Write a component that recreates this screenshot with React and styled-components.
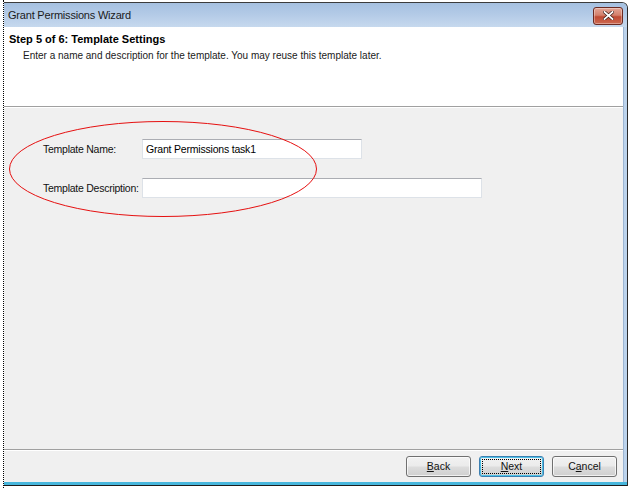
import React from 'react';
import styled, { createGlobalStyle, css } from 'styled-components';

const GlobalStyle = createGlobalStyle`
  html, body {
    margin: 0;
    padding: 0;
    background: #fff;
  }
  body {
    font-family: "Liberation Sans", Arial, sans-serif;
    font-size: 11px;
    color: #000;
  }
`;

const Page = styled.div`
  width: 630px;
  height: 490px;
  overflow: hidden;
  background: #fff;
  position: relative;
`;

const Frame = styled.div`
  margin-left: 3px;
  height: 488px;
  border-left: 1px dotted #000;
  display: flex;
`;

const Window = styled.div`
  margin-top: 2px;
  width: 624px;
  height: 484px;
  display: flex;
  flex-direction: column;
  border-top: 1px solid #3b3b3b;
  border-right: 1px solid #2b2b2b;
  border-top-right-radius: 6px;
  box-sizing: border-box;
  background: #bcd3ec;
  position: relative;
`;

const TitleBar = styled.div`
  height: 24px;
  flex: none;
  display: flex;
  align-items: center;
  justify-content: space-between;
  padding: 0 4px 0 4px;
  background: linear-gradient(to bottom, #a5c0e0 0%, #b4cbe7 50%, #c6d9ee 100%);
  border-top-right-radius: 5px;
`;

const Title = styled.span`
  font-family: "Liberation Sans", Arial, sans-serif;
  font-size: 11px;
  color: #1b1b1b;
  letter-spacing: -0.2px;
`;

const CloseButton = styled.div`
  width: 28px;
  height: 16px;
  margin-top: 1px;
  border: 1px solid #6b2a22;
  border-radius: 3px;
  background: linear-gradient(to bottom, #e3a596 0%, #d4806c 45%, #c04a33 55%, #cc6a52 100%);
  display: flex;
  align-items: center;
  justify-content: center;
  box-shadow: inset 0 0 0 1px rgba(255, 255, 255, 0.35);
`;

const Client = styled.div`
  flex: 1;
  display: flex;
  flex-direction: column;
  margin-right: 3px;
  border-right: 1px solid #9db6d3;
  background: #f0f0f0;
`;

const Header = styled.div`
  height: 80px;
  flex: none;
  background: #fff;
  padding: 4px 0 0 5px;
  box-sizing: border-box;
  border-bottom: 1px solid #a0a0a0;
  box-shadow: 0 1px 0 #fff;
`;

const StepTitle = styled.div`
  font-family: "Liberation Sans", Arial, sans-serif;
  font-weight: bold;
  font-size: 11px;
  color: #000;
  height: 16px;
  line-height: 16px;
`;

const StepText = styled.div`
  margin-top: 3px;
  padding-left: 14px;
  font-size: 10px;
  color: #1a1a1a;
`;

const Body = styled.div`
  flex: 1;
  position: relative;
  padding: 32px 0 0 39px;
  box-sizing: border-box;
`;

const Form = styled.div`
  display: grid;
  grid-template-columns: 99px auto;
  row-gap: 19px;
  align-items: center;
`;

const Label = styled.label`
  font-size: 10.5px;
  letter-spacing: -0.25px;
  white-space: nowrap;
  color: #111;
`;

const Field = styled.div`
  width: ${(p) => p.$width}px;
  height: 20px;
  box-sizing: border-box;
  background: #fff;
  border: 1px solid #dde2e8;
  border-top-color: #abadb3;
  padding: 0 3px;
  display: flex;
  align-items: center;
  font-size: 10.5px;
  letter-spacing: -0.2px;
  color: #000;
`;

const Ellipse = styled.svg`
  position: absolute;
  left: -4px;
  top: 0;
  pointer-events: none;
`;

const Footer = styled.div`
  height: 32px;
  flex: none;
  display: flex;
  justify-content: flex-end;
  align-items: center;
  gap: 8px;
  padding-right: 6px;
  border-top: 1px solid #a0a0a0;
  box-shadow: inset 0 1px 0 #fff;
`;

const Button = styled.button`
  width: 65px;
  height: 21px;
  box-sizing: border-box;
  border: 1px solid #707070;
  border-radius: 3px;
  background: linear-gradient(to bottom, #f2f2f2 0%, #ebebeb 48%, #dddddd 52%, #cfcfcf 100%);
  font-family: "Liberation Sans", Arial, sans-serif;
  font-size: 10.5px;
  color: #111;
  padding: 0;
  box-shadow: inset 0 0 0 1px rgba(255, 255, 255, 0.7);
  ${(p) =>
    p.$default &&
    css`
      border-color: #3c7fb1;
      box-shadow: inset 0 0 0 1px #4bc0e6;
      outline: 1px dotted #000;
      outline-offset: -4px;
    `}
  u {
    text-decoration: underline;
  }
`;

const BottomEdge = styled.div`
  height: 3px;
  flex: none;
  background: #47b6dc;
  border-bottom: 1px solid #1d1d1d;
`;

const App = () => {
  return (
    <>
      <GlobalStyle />
      <Page>
        <Frame>
          <Window>
            <TitleBar>
              <Title>Grant Permissions Wizard</Title>
              <CloseButton>
                <svg width="11" height="9" viewBox="0 0 11 9">
                  <path
                    d="M1.5 1 L9.5 8 M9.5 1 L1.5 8"
                    stroke="#3a1a15"
                    strokeWidth="3.2"
                    strokeLinecap="square"
                  />
                  <path
                    d="M1.5 1 L9.5 8 M9.5 1 L1.5 8"
                    stroke="#fff"
                    strokeWidth="1.8"
                    strokeLinecap="square"
                  />
                </svg>
              </CloseButton>
            </TitleBar>
            <Client>
              <Header>
                <StepTitle>Step 5 of 6: Template Settings</StepTitle>
                <StepText>
                  Enter a name and description for the template. You may reuse this template later.
                </StepText>
              </Header>
              <Body>
                <Form>
                  <Label>Template Name:</Label>
                  <Field $width={220}>Grant Permissions task1</Field>
                  <Label>Template Description:</Label>
                  <Field $width={340} />
                </Form>
                <Ellipse width="330" height="120" viewBox="0 0 330 120">
                  <ellipse cx="163" cy="62" rx="153.5" ry="47.5" fill="none" stroke="#e61010" strokeWidth="1" />
                </Ellipse>
              </Body>
              <Footer>
                <Button>
                  <u>B</u>ack
                </Button>
                <Button $default>
                  <u>N</u>ext
                </Button>
                <Button>
                  C<u>a</u>ncel
                </Button>
              </Footer>
            </Client>
            <BottomEdge />
          </Window>
        </Frame>
      </Page>
    </>
  );
};

export default App;
